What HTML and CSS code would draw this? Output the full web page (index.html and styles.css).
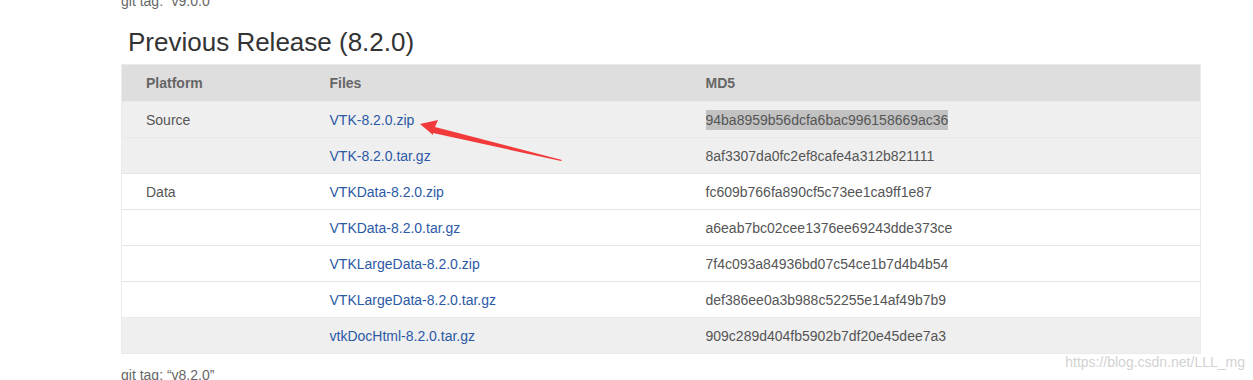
FILE: index.html
```html
<!DOCTYPE html>
<html>
<head>
    <title>VTK Download</title>
    <link rel="stylesheet" href="styles.css">
</head>
<body>
    <div class="page">
        <p class="git-tag top">git tag: &ldquo;v9.0.0&rdquo;</p>
        <h2>Previous Release (8.2.0)</h2>
        <div class="table-wrap">
            <table class="release">
                <thead>
                    <tr>
                        <th class="col-platform">Platform</th>
                        <th class="col-files">Files</th>
                        <th>MD5</th>
                    </tr>
                </thead>
                <tbody>
                    <tr class="shade">
                        <td>Source</td>
                        <td><a href="#">VTK-8.2.0.zip</a></td>
                        <td><span class="selected">94ba8959b56dcfa6bac996158669ac36</span></td>
                    </tr>
                    <tr class="shade">
                        <td></td>
                        <td><a href="#">VTK-8.2.0.tar.gz</a></td>
                        <td>8af3307da0fc2ef8cafe4a312b821111</td>
                    </tr>
                    <tr>
                        <td>Data</td>
                        <td><a href="#">VTKData-8.2.0.zip</a></td>
                        <td>fc609b766fa890cf5c73ee1ca9ff1e87</td>
                    </tr>
                    <tr>
                        <td></td>
                        <td><a href="#">VTKData-8.2.0.tar.gz</a></td>
                        <td>a6eab7bc02cee1376ee69243dde373ce</td>
                    </tr>
                    <tr>
                        <td></td>
                        <td><a href="#">VTKLargeData-8.2.0.zip</a></td>
                        <td>7f4c093a84936bd07c54ce1b7d4b4b54</td>
                    </tr>
                    <tr>
                        <td></td>
                        <td><a href="#">VTKLargeData-8.2.0.tar.gz</a></td>
                        <td>def386ee0a3b988c52255e14af49b7b9</td>
                    </tr>
                    <tr class="shade">
                        <td></td>
                        <td><a href="#">vtkDocHtml-8.2.0.tar.gz</a></td>
                        <td>909c289d404fb5902b7df20e45dee7a3</td>
                    </tr>
                </tbody>
            </table>
            <!-- annotation arrow drawn over the table -->
            <svg class="arrow" width="160" height="50" viewBox="0 0 160 50">
                <polygon points="0,8 18,4 15,11 142,44 141,45 13,17 13,19" fill="#f33a3a"/>
            </svg>
        </div>
        <p class="git-tag">git tag: &ldquo;v8.2.0&rdquo;</p>
    </div>
    <div class="watermark">https://blog.csdn.net/LLL_mg</div>
</body>
</html>
```

FILE: styles.css
```css
* {
    margin: 0;
    padding: 0;
    box-sizing: border-box;
}
body {
    font-family: 'Liberation Sans', Arial, sans-serif;
    font-size: 14px;
    color: #555;
    background: #fff;
    overflow: hidden;
}
.page {
    width: 1080px;
    margin-left: 121px;
}
.git-tag {
    color: #666;
    line-height: 20px;
}
.git-tag.top {
    margin-top: -9px;
}
h2 {
    font-size: 26px;
    font-weight: 400;
    color: #333;
    line-height: 30px;
    margin: 16px 0 7px 7px;
}
.table-wrap {
    position: relative;
    margin-bottom: 11px;
}
.release {
    width: 100%;
    border-collapse: collapse;
    border: 1px solid #eaeaea;
}
.release th,
.release td {
    height: 36px;
    padding: 0 0 0 24px;
    text-align: left;
    vertical-align: middle;
    border-top: 1px solid #e6e6e6;
}
.release th {
    height: 37px;
    background: #dedede;
    color: #666;
    font-weight: 700;
    border-top: none;
}
.release .col-platform {
    width: 184px;
}
.release .col-files {
    width: 376px;
}
.release tr.shade td {
    background: #efefef;
    border-top-color: #e9e9e9;
}
.release a {
    color: #2b59a6;
    text-decoration: none;
}
.selected {
    background: #c2c2c2;
    padding: 2px 0;
}
.arrow {
    position: absolute;
    left: 299px;
    top: 52px;
}
.watermark {
    position: absolute;
    right: 8px;
    top: 352px;
    color: #d2d2d2;
    font-size: 14px;
    line-height: 20px;
}
```
